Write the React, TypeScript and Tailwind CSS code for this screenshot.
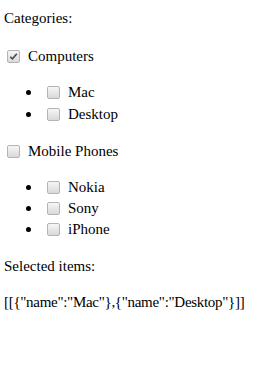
import { useState } from 'react';

type Item = { name: string };
type Category = { name: string; items: Item[] };

const CATEGORIES: Category[] = [
  { name: 'Computers', items: [{ name: 'Mac' }, { name: 'Desktop' }] },
  { name: 'Mobile Phones', items: [{ name: 'Nokia' }, { name: 'Sony' }, { name: 'iPhone' }] },
];

// Old-Windows style grey checkbox, drawn by hand so it looks the same everywhere.
function Box({ checked, onClick }: { checked: boolean; onClick: () => void }) {
  return (
    <button
      type="button"
      role="checkbox"
      aria-checked={checked}
      onClick={onClick}
      className="relative grid h-[13px] w-[13px] shrink-0 place-items-center rounded-[2px] border border-[#b4b4b4] bg-gradient-to-b from-[#f6f6f6] to-[#d9d9d9]"
    >
      {checked && (
        <svg viewBox="0 0 11 11" className="h-[9px] w-[9px]" aria-hidden="true">
          <path d="M1.5 5.8 L4.2 8.4 L9.6 2.2" fill="none" stroke="#4a4a4a" strokeWidth="2" />
        </svg>
      )}
    </button>
  );
}

export default function App() {
  // checkbox ticks and the "selected" model are kept apart, as in the original page
  const [ticked, setTicked] = useState<string[]>(['Computers']);
  const [selected] = useState<Item[]>([{ name: 'Mac' }, { name: 'Desktop' }]);

  const toggle = (name: string) =>
    setTicked((s) => (s.includes(name) ? s.filter((n) => n !== name) : [...s, name]));

  const json = JSON.stringify([selected]);

  return (
    <div className="min-h-screen bg-white pl-1 pt-2 font-['Liberation_Serif',serif] text-[15px] text-black">
      <div className="flex h-[21px] items-center">Categories:</div>

      {CATEGORIES.map((cat, ci) => (
        <div key={cat.name} className={ci === 0 ? 'mt-[16px]' : 'mt-[15px]'}>
          <div className="flex h-[22px] items-center">
            <span className="ml-[3px] mr-[8px] flex">
              <Box checked={ticked.includes(cat.name)} onClick={() => toggle(cat.name)} />
            </span>
            {cat.name}
          </div>
          <ul className={ci === 0 ? 'mt-[14px]' : 'mt-[15px]'}>
            {cat.items.map((item) => (
              <li
                key={item.name}
                className={`flex items-center pl-[22px] ${ci === 0 ? 'h-[22px]' : 'h-[21px]'}`}
              >
                <span className="h-[5px] w-[5px] rounded-full bg-black" />
                <span className="ml-[16px] mr-[8px] flex">
                  <Box checked={ticked.includes(item.name)} onClick={() => toggle(item.name)} />
                </span>
                {item.name}
              </li>
            ))}
          </ul>
        </div>
      ))}

      <div className="mt-[15px] flex h-[22px] items-center">Selected items:</div>
      <div className="mt-[14px] flex h-[22px] items-center whitespace-nowrap tracking-[-0.3px]">{json}</div>
    </div>
  );
}
